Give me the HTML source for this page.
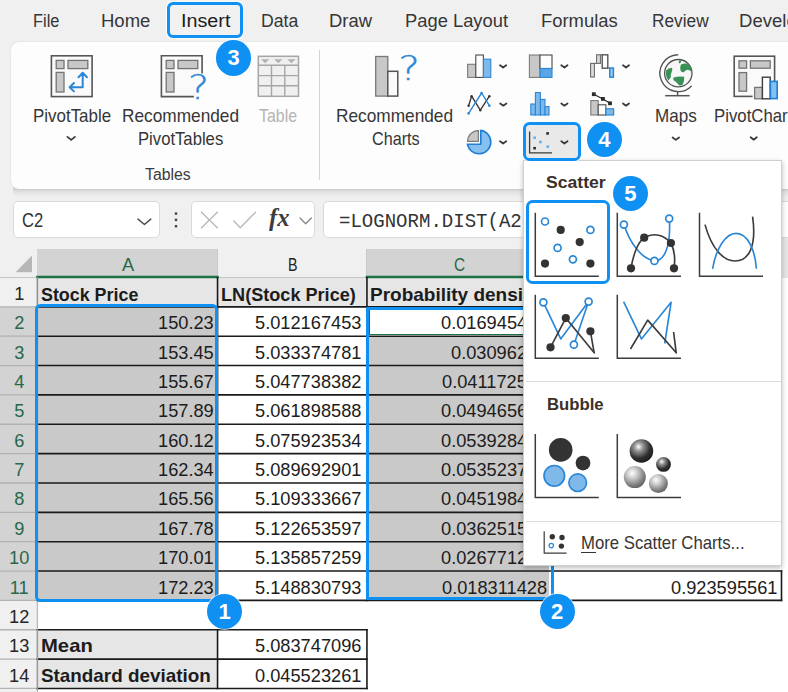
<!DOCTYPE html>
<html lang="en"><head><meta charset="utf-8"><title>Excel - Insert Scatter Chart</title>
<style>
html,body{margin:0;padding:0}
body{width:788px;height:692px;overflow:hidden;background:#f0f0f0;font-family:"Liberation Sans",sans-serif;}
#app{position:relative;width:788px;height:692px;overflow:hidden;background:#f0f0f0}
#app div,#app span.t,#app svg{position:absolute}
.t{white-space:nowrap;transform-origin:0 0;display:block}
.bd{border-radius:50%;background:#0f90f3;color:#fff;font-weight:bold;font-size:22px;text-align:center;box-shadow:0 0 0 1px rgba(255,255,255,.7)}
</style></head>
<body><div id="app">
<!-- ribbon tabs -->
<div style="left:166.80px;top:2.20px;width:76.50px;height:35.80px;box-sizing:border-box;border:3.5px solid #0f90f3;border-radius:6px;background:#f1f1f1;box-shadow:0 0 0 1.2px rgba(255,255,255,.8);"></div>
<span class="t" style="left:33.00px;top:12.75px;font-size:17.5px;line-height:17.5px;color:#363636;transform:scaleX(0.9398);">File</span>
<span class="t" style="left:100.60px;top:12.75px;font-size:17.5px;line-height:17.5px;color:#363636;transform:scaleX(1.0582);">Home</span>
<span class="t" style="left:181.00px;top:12.75px;font-size:17.5px;line-height:17.5px;color:#1c1c1c;transform:scaleX(1.1287);">Insert</span>
<span class="t" style="left:260.50px;top:12.75px;font-size:17.5px;line-height:17.5px;color:#363636;transform:scaleX(1.0090);">Data</span>
<span class="t" style="left:329.00px;top:12.75px;font-size:17.5px;line-height:17.5px;color:#363636;transform:scaleX(1.0530);">Draw</span>
<span class="t" style="left:405.00px;top:12.75px;font-size:17.5px;line-height:17.5px;color:#363636;transform:scaleX(1.0481);">Page Layout</span>
<span class="t" style="left:541.00px;top:12.75px;font-size:17.5px;line-height:17.5px;color:#363636;transform:scaleX(1.0517);">Formulas</span>
<span class="t" style="left:651.70px;top:12.75px;font-size:17.5px;line-height:17.5px;color:#363636;transform:scaleX(0.9864);">Review</span>
<span class="t" style="left:739.40px;top:12.75px;font-size:17.5px;line-height:17.5px;color:#363636;transform:scaleX(1.0600);">Developer</span>
<!-- ribbon -->
<div style="left:13.00px;top:180.00px;width:787.00px;height:18.50px;background:linear-gradient(to bottom,#d3d3d3 0,#d3d3d3 9px,#e3e3e3 12.5px,#ececec 16px,#f0f0f0 18.5px);border-radius:8px 0 0 8px;"></div>
<div style="left:11.40px;top:42.40px;width:788.60px;height:146.60px;background:#fdfdfd;border-radius:8px 0 0 8px;box-shadow:0 0 1.5px rgba(0,0,0,.18);"></div>
<span class="t" style="left:33.00px;top:107.50px;font-size:17.8px;line-height:17.8px;color:#363636;transform:scaleX(0.9522);">PivotTable</span>
<span class="t" style="left:122.20px;top:107.50px;font-size:17.8px;line-height:17.8px;color:#363636;transform:scaleX(0.9709);">Recommended</span>
<span class="t" style="left:138.40px;top:131.00px;font-size:17.8px;line-height:17.8px;color:#363636;transform:scaleX(0.9371);">PivotTables</span>
<span class="t" style="left:259.20px;top:107.50px;font-size:17.8px;line-height:17.8px;color:#b4b4b4;transform:scaleX(0.8953);">Table</span>
<span class="t" style="left:145.10px;top:166.70px;font-size:16px;line-height:16px;color:#3a3a3a;transform:scaleX(0.9881);">Tables</span>
<div style="left:319.40px;top:50.00px;width:1.00px;height:130.00px;background:#d4d4d4;"></div>
<span class="t" style="left:336.30px;top:107.50px;font-size:17.8px;line-height:17.8px;color:#363636;transform:scaleX(0.9709);">Recommended</span>
<span class="t" style="left:371.60px;top:131.00px;font-size:17.8px;line-height:17.8px;color:#363636;transform:scaleX(0.9098);">Charts</span>
<span class="t" style="left:655.30px;top:107.60px;font-size:17.8px;line-height:17.8px;color:#363636;transform:scaleX(0.9603);">Maps</span>
<span class="t" style="left:714.40px;top:107.60px;font-size:17.8px;line-height:17.8px;color:#363636;transform:scaleX(0.9435);">PivotChart</span>
<!-- formula bar -->
<div style="left:12.70px;top:201.20px;width:147.70px;height:36.70px;background:#ffffff;box-sizing:border-box;border:1px solid #dadada;border-radius:5px;"></div>
<div style="left:191.40px;top:201.20px;width:124.10px;height:36.70px;background:#ffffff;box-sizing:border-box;border:1px solid #dadada;border-radius:5px;"></div>
<div style="left:322.70px;top:201.20px;width:477.30px;height:36.70px;background:#ffffff;box-sizing:border-box;border:1px solid #dadada;border-radius:5px;"></div>
<span class="t" style="left:21.60px;top:211.05px;font-size:19.5px;line-height:19.5px;color:#333;transform:scaleX(0.8505);">C2</span>
<span class="t" style="left:269.40px;top:205.40px;font-size:25px;line-height:25px;color:#3c3c3c;transform:scaleX(0.9892);font-family:'Liberation Serif',serif;font-weight:bold;font-style:italic;">fx</span>
<span class="t" style="left:339.00px;top:212.80px;font-size:19.6px;line-height:19.6px;color:#333;transform:scaleX(0.9715);font-family:'Liberation Mono',monospace;">=LOGNORM.DIST(A2,$B$13,$B$14,FALSE)</span>
<!-- sheet -->
<div style="left:0.00px;top:249.00px;width:788.00px;height:443.00px;background:#ffffff;"></div>
<div style="left:0.00px;top:249.40px;width:37.40px;height:28.40px;background:#f0f0f0;"></div>
<div style="left:37.40px;top:249.40px;width:180.15px;height:28.40px;background:#d3d3d3;"></div>
<div style="left:217.55px;top:249.40px;width:149.40px;height:28.40px;background:#f0f0f0;"></div>
<div style="left:366.95px;top:249.40px;width:185.35px;height:28.40px;background:#d3d3d3;"></div>
<div style="left:552.30px;top:249.40px;width:235.70px;height:28.40px;background:#f0f0f0;"></div>
<div style="left:217.55px;top:276.80px;width:149.40px;height:1.00px;background:#c6c6c6;"></div>
<div style="left:552.30px;top:276.80px;width:235.70px;height:1.00px;background:#c6c6c6;"></div>
<div style="left:0.00px;top:276.80px;width:37.40px;height:1.00px;background:#c6c6c6;"></div>
<div style="left:217.05px;top:249.40px;width:1.00px;height:28.40px;background:#c9c9c9;"></div>
<div style="left:366.45px;top:249.40px;width:1.00px;height:28.40px;background:#c9c9c9;"></div>
<span class="t" style="left:121.80px;top:255.80px;font-size:18.2px;line-height:18.2px;color:#27684a;transform:scaleX(1.0050);">A</span>
<span class="t" style="left:288.30px;top:255.80px;font-size:18.2px;line-height:18.2px;color:#262626;transform:scaleX(0.7826);">B</span>
<span class="t" style="left:454.40px;top:255.80px;font-size:18.2px;line-height:18.2px;color:#27684a;transform:scaleX(0.8445);">C</span>
<div style="left:0.00px;top:277.80px;width:37.40px;height:29.05px;background:#f0f0f0;"></div>
<div style="left:0.00px;top:306.85px;width:37.40px;height:29.36px;background:#d3d3d3;"></div>
<div style="left:0.00px;top:336.21px;width:37.40px;height:29.35px;background:#d3d3d3;"></div>
<div style="left:0.00px;top:365.56px;width:37.40px;height:29.36px;background:#d3d3d3;"></div>
<div style="left:0.00px;top:394.92px;width:37.40px;height:29.36px;background:#d3d3d3;"></div>
<div style="left:0.00px;top:424.27px;width:37.40px;height:29.35px;background:#d3d3d3;"></div>
<div style="left:0.00px;top:453.62px;width:37.40px;height:29.36px;background:#d3d3d3;"></div>
<div style="left:0.00px;top:482.98px;width:37.40px;height:29.36px;background:#d3d3d3;"></div>
<div style="left:0.00px;top:512.34px;width:37.40px;height:29.36px;background:#d3d3d3;"></div>
<div style="left:0.00px;top:541.69px;width:37.40px;height:29.36px;background:#d3d3d3;"></div>
<div style="left:0.00px;top:571.05px;width:37.40px;height:29.36px;background:#d3d3d3;"></div>
<div style="left:0.00px;top:600.40px;width:37.40px;height:29.36px;background:#f0f0f0;"></div>
<div style="left:0.00px;top:629.76px;width:37.40px;height:29.35px;background:#f0f0f0;"></div>
<div style="left:0.00px;top:659.11px;width:37.40px;height:29.36px;background:#f0f0f0;"></div>
<div style="left:0.00px;top:688.47px;width:37.40px;height:29.36px;background:#f0f0f0;"></div>
<span class="t" style="left:14.14px;top:285.30px;font-size:18.2px;line-height:18.2px;color:#262626;transform:scaleX(1.0000);">1</span>
<span class="t" style="left:14.14px;top:314.35px;font-size:18.2px;line-height:18.2px;color:#27684a;transform:scaleX(1.0000);">2</span>
<span class="t" style="left:14.14px;top:343.71px;font-size:18.2px;line-height:18.2px;color:#27684a;transform:scaleX(1.0000);">3</span>
<span class="t" style="left:14.14px;top:373.06px;font-size:18.2px;line-height:18.2px;color:#27684a;transform:scaleX(1.0000);">4</span>
<span class="t" style="left:14.14px;top:402.42px;font-size:18.2px;line-height:18.2px;color:#27684a;transform:scaleX(1.0000);">5</span>
<span class="t" style="left:14.14px;top:431.77px;font-size:18.2px;line-height:18.2px;color:#27684a;transform:scaleX(1.0000);">6</span>
<span class="t" style="left:14.14px;top:461.12px;font-size:18.2px;line-height:18.2px;color:#27684a;transform:scaleX(1.0000);">7</span>
<span class="t" style="left:14.14px;top:490.48px;font-size:18.2px;line-height:18.2px;color:#27684a;transform:scaleX(1.0000);">8</span>
<span class="t" style="left:14.14px;top:519.84px;font-size:18.2px;line-height:18.2px;color:#27684a;transform:scaleX(1.0000);">9</span>
<span class="t" style="left:9.08px;top:549.19px;font-size:18.2px;line-height:18.2px;color:#27684a;transform:scaleX(1.0000);">10</span>
<span class="t" style="left:9.75px;top:578.55px;font-size:18.2px;line-height:18.2px;color:#27684a;transform:scaleX(1.0000);">11</span>
<span class="t" style="left:9.08px;top:607.90px;font-size:18.2px;line-height:18.2px;color:#262626;transform:scaleX(1.0000);">12</span>
<span class="t" style="left:9.08px;top:637.26px;font-size:18.2px;line-height:18.2px;color:#262626;transform:scaleX(1.0000);">13</span>
<span class="t" style="left:9.08px;top:666.61px;font-size:18.2px;line-height:18.2px;color:#262626;transform:scaleX(1.0000);">14</span>
<div style="left:37.40px;top:277.80px;width:514.90px;height:29.05px;background:#e6e6e6;"></div>
<div style="left:37.40px;top:306.85px;width:180.15px;height:293.55px;background:#c9c9c9;"></div>
<div style="left:366.95px;top:306.85px;width:182.05px;height:293.55px;background:#c9c9c9;"></div>
<div style="left:366.95px;top:306.85px;width:182.05px;height:29.36px;background:#ffffff;"></div>
<div style="left:37.40px;top:629.76px;width:180.15px;height:58.71px;background:#e6e6e6;"></div>
<svg width="788" height="692" viewBox="0 0 788 692" style="left:0;top:0" stroke-linecap="square"><line x1="37.40" y1="277.05" x2="217.55" y2="277.05" stroke="#1f7246" stroke-width="2.5"/><line x1="366.95" y1="277.05" x2="552.30" y2="277.05" stroke="#1f7246" stroke-width="2.5"/><line x1="0.00" y1="306.85" x2="37.40" y2="306.85" stroke="#b2b2b2" stroke-width="1.3"/><line x1="0.00" y1="336.21" x2="37.40" y2="336.21" stroke="#b2b2b2" stroke-width="1.3"/><line x1="0.00" y1="365.56" x2="37.40" y2="365.56" stroke="#b2b2b2" stroke-width="1.3"/><line x1="0.00" y1="394.92" x2="37.40" y2="394.92" stroke="#b2b2b2" stroke-width="1.3"/><line x1="0.00" y1="424.27" x2="37.40" y2="424.27" stroke="#b2b2b2" stroke-width="1.3"/><line x1="0.00" y1="453.62" x2="37.40" y2="453.62" stroke="#b2b2b2" stroke-width="1.3"/><line x1="0.00" y1="482.98" x2="37.40" y2="482.98" stroke="#b2b2b2" stroke-width="1.3"/><line x1="0.00" y1="512.34" x2="37.40" y2="512.34" stroke="#b2b2b2" stroke-width="1.3"/><line x1="0.00" y1="541.69" x2="37.40" y2="541.69" stroke="#b2b2b2" stroke-width="1.3"/><line x1="0.00" y1="571.05" x2="37.40" y2="571.05" stroke="#b2b2b2" stroke-width="1.3"/><line x1="0.00" y1="600.40" x2="37.40" y2="600.40" stroke="#b2b2b2" stroke-width="1.3"/><line x1="0.00" y1="629.76" x2="37.40" y2="629.76" stroke="#b2b2b2" stroke-width="1.3"/><line x1="0.00" y1="659.11" x2="37.40" y2="659.11" stroke="#b2b2b2" stroke-width="1.3"/><line x1="0.00" y1="688.47" x2="37.40" y2="688.47" stroke="#b2b2b2" stroke-width="1.3"/><line x1="0.00" y1="717.82" x2="37.40" y2="717.82" stroke="#b2b2b2" stroke-width="1.3"/><line x1="37.40" y1="277.80" x2="37.40" y2="692.00" stroke="#b8b8b8" stroke-width="1.3"/><line x1="37.40" y1="306.85" x2="552.30" y2="306.85" stroke="#1a1a1a" stroke-width="1.6"/><line x1="37.40" y1="336.21" x2="552.30" y2="336.21" stroke="#1a1a1a" stroke-width="1.6"/><line x1="37.40" y1="365.56" x2="552.30" y2="365.56" stroke="#1a1a1a" stroke-width="1.6"/><line x1="37.40" y1="394.92" x2="552.30" y2="394.92" stroke="#1a1a1a" stroke-width="1.6"/><line x1="37.40" y1="424.27" x2="552.30" y2="424.27" stroke="#1a1a1a" stroke-width="1.6"/><line x1="37.40" y1="453.62" x2="552.30" y2="453.62" stroke="#1a1a1a" stroke-width="1.6"/><line x1="37.40" y1="482.98" x2="552.30" y2="482.98" stroke="#1a1a1a" stroke-width="1.6"/><line x1="37.40" y1="512.34" x2="552.30" y2="512.34" stroke="#1a1a1a" stroke-width="1.6"/><line x1="37.40" y1="541.69" x2="552.30" y2="541.69" stroke="#1a1a1a" stroke-width="1.6"/><line x1="37.40" y1="571.05" x2="552.30" y2="571.05" stroke="#1a1a1a" stroke-width="1.6"/><line x1="37.40" y1="600.40" x2="552.30" y2="600.40" stroke="#1a1a1a" stroke-width="1.6"/><line x1="552.30" y1="571.05" x2="781.50" y2="571.05" stroke="#1a1a1a" stroke-width="1.6"/><line x1="552.30" y1="600.40" x2="781.50" y2="600.40" stroke="#1a1a1a" stroke-width="1.6"/><line x1="781.50" y1="571.05" x2="781.50" y2="600.40" stroke="#1a1a1a" stroke-width="1.6"/><line x1="37.40" y1="277.80" x2="37.40" y2="600.40" stroke="#8f8f8f" stroke-width="1.4"/><line x1="217.55" y1="277.80" x2="217.55" y2="600.40" stroke="#1a1a1a" stroke-width="1.6"/><line x1="366.95" y1="277.80" x2="366.95" y2="600.40" stroke="#1a1a1a" stroke-width="1.6"/><line x1="552.30" y1="277.80" x2="552.30" y2="600.40" stroke="#1a1a1a" stroke-width="1.6"/><line x1="37.40" y1="629.76" x2="366.95" y2="629.76" stroke="#1a1a1a" stroke-width="1.6"/><line x1="37.40" y1="659.11" x2="366.95" y2="659.11" stroke="#1a1a1a" stroke-width="1.6"/><line x1="37.40" y1="688.47" x2="366.95" y2="688.47" stroke="#1a1a1a" stroke-width="1.6"/><line x1="37.40" y1="629.76" x2="37.40" y2="688.47" stroke="#9a9a9a" stroke-width="1.4"/><line x1="217.55" y1="629.76" x2="217.55" y2="688.47" stroke="#1a1a1a" stroke-width="1.6"/><line x1="366.95" y1="629.76" x2="366.95" y2="688.47" stroke="#1a1a1a" stroke-width="1.6"/></svg>
<div style="left:368.55px;top:308.45px;width:183.75px;height:26.56px;box-sizing:border-box;border:1.4px solid #1f7246;border-right:none;"></div>
<span class="t" style="left:40.60px;top:285.50px;font-size:18.2px;line-height:18.2px;color:#1c1c1c;transform:scaleX(0.9824);font-weight:bold;">Stock Price</span>
<span class="t" style="left:221.20px;top:285.50px;font-size:18.2px;line-height:18.2px;color:#1c1c1c;transform:scaleX(0.9954);font-weight:bold;">LN(Stock Price)</span>
<span class="t" style="left:370.20px;top:285.50px;font-size:18.2px;line-height:18.2px;color:#1c1c1c;transform:scaleX(1.0441);font-weight:bold;">Probability density</span>
<span class="t" style="left:157.61px;top:314.35px;font-size:18.2px;line-height:18.2px;color:#1c1c1c;transform:scaleX(1.0022);">150.23</span>
<span class="t" style="left:255.39px;top:314.35px;font-size:18.2px;line-height:18.2px;color:#1c1c1c;transform:scaleX(1.0022);">5.012167453</span>
<span class="t" style="left:440.99px;top:314.35px;font-size:18.2px;line-height:18.2px;color:#1c1c1c;transform:scaleX(1.0022);">0.016945447</span>
<span class="t" style="left:157.61px;top:343.71px;font-size:18.2px;line-height:18.2px;color:#1c1c1c;transform:scaleX(1.0022);">153.45</span>
<span class="t" style="left:255.39px;top:343.71px;font-size:18.2px;line-height:18.2px;color:#1c1c1c;transform:scaleX(1.0022);">5.033374781</span>
<span class="t" style="left:451.13px;top:343.71px;font-size:18.2px;line-height:18.2px;color:#1c1c1c;transform:scaleX(1.0022);">0.03096268</span>
<span class="t" style="left:157.61px;top:373.06px;font-size:18.2px;line-height:18.2px;color:#1c1c1c;transform:scaleX(1.0022);">155.67</span>
<span class="t" style="left:255.39px;top:373.06px;font-size:18.2px;line-height:18.2px;color:#1c1c1c;transform:scaleX(1.0022);">5.047738382</span>
<span class="t" style="left:442.34px;top:373.06px;font-size:18.2px;line-height:18.2px;color:#1c1c1c;transform:scaleX(1.0022);">0.041172598</span>
<span class="t" style="left:157.61px;top:402.42px;font-size:18.2px;line-height:18.2px;color:#1c1c1c;transform:scaleX(1.0022);">157.89</span>
<span class="t" style="left:255.39px;top:402.42px;font-size:18.2px;line-height:18.2px;color:#1c1c1c;transform:scaleX(1.0022);">5.061898588</span>
<span class="t" style="left:440.99px;top:402.42px;font-size:18.2px;line-height:18.2px;color:#1c1c1c;transform:scaleX(1.0022);">0.049465627</span>
<span class="t" style="left:157.61px;top:431.77px;font-size:18.2px;line-height:18.2px;color:#1c1c1c;transform:scaleX(1.0022);">160.12</span>
<span class="t" style="left:255.39px;top:431.77px;font-size:18.2px;line-height:18.2px;color:#1c1c1c;transform:scaleX(1.0022);">5.075923534</span>
<span class="t" style="left:440.99px;top:431.77px;font-size:18.2px;line-height:18.2px;color:#1c1c1c;transform:scaleX(1.0022);">0.053928408</span>
<span class="t" style="left:157.61px;top:461.12px;font-size:18.2px;line-height:18.2px;color:#1c1c1c;transform:scaleX(1.0022);">162.34</span>
<span class="t" style="left:255.39px;top:461.12px;font-size:18.2px;line-height:18.2px;color:#1c1c1c;transform:scaleX(1.0022);">5.089692901</span>
<span class="t" style="left:440.99px;top:461.12px;font-size:18.2px;line-height:18.2px;color:#1c1c1c;transform:scaleX(1.0022);">0.053523787</span>
<span class="t" style="left:157.61px;top:490.48px;font-size:18.2px;line-height:18.2px;color:#1c1c1c;transform:scaleX(1.0022);">165.56</span>
<span class="t" style="left:255.39px;top:490.48px;font-size:18.2px;line-height:18.2px;color:#1c1c1c;transform:scaleX(1.0022);">5.109333667</span>
<span class="t" style="left:440.99px;top:490.48px;font-size:18.2px;line-height:18.2px;color:#1c1c1c;transform:scaleX(1.0022);">0.045198418</span>
<span class="t" style="left:157.61px;top:519.84px;font-size:18.2px;line-height:18.2px;color:#1c1c1c;transform:scaleX(1.0022);">167.78</span>
<span class="t" style="left:255.39px;top:519.84px;font-size:18.2px;line-height:18.2px;color:#1c1c1c;transform:scaleX(1.0022);">5.122653597</span>
<span class="t" style="left:440.99px;top:519.84px;font-size:18.2px;line-height:18.2px;color:#1c1c1c;transform:scaleX(1.0022);">0.036251502</span>
<span class="t" style="left:157.61px;top:549.19px;font-size:18.2px;line-height:18.2px;color:#1c1c1c;transform:scaleX(1.0022);">170.01</span>
<span class="t" style="left:255.39px;top:549.19px;font-size:18.2px;line-height:18.2px;color:#1c1c1c;transform:scaleX(1.0022);">5.135857259</span>
<span class="t" style="left:440.99px;top:549.19px;font-size:18.2px;line-height:18.2px;color:#1c1c1c;transform:scaleX(1.0022);">0.026771294</span>
<span class="t" style="left:157.61px;top:578.55px;font-size:18.2px;line-height:18.2px;color:#1c1c1c;transform:scaleX(1.0022);">172.23</span>
<span class="t" style="left:255.39px;top:578.55px;font-size:18.2px;line-height:18.2px;color:#1c1c1c;transform:scaleX(1.0022);">5.148830793</span>
<span class="t" style="left:442.34px;top:578.55px;font-size:18.2px;line-height:18.2px;color:#1c1c1c;transform:scaleX(1.0022);">0.018311428</span>
<span class="t" style="left:670.69px;top:578.55px;font-size:18.2px;line-height:18.2px;color:#1c1c1c;transform:scaleX(1.0022);">0.923595561</span>
<span class="t" style="left:41.20px;top:637.26px;font-size:18.2px;line-height:18.2px;color:#1c1c1c;transform:scaleX(1.1134);font-weight:bold;">Mean</span>
<span class="t" style="left:41.20px;top:666.61px;font-size:18.2px;line-height:18.2px;color:#1c1c1c;transform:scaleX(1.0365);font-weight:bold;">Standard deviation</span>
<span class="t" style="left:255.39px;top:637.26px;font-size:18.2px;line-height:18.2px;color:#1c1c1c;transform:scaleX(1.0022);">5.083747096</span>
<span class="t" style="left:255.39px;top:666.61px;font-size:18.2px;line-height:18.2px;color:#1c1c1c;transform:scaleX(1.0022);">0.045523261</span>
<div style="left:35.25px;top:303.95px;width:183.20px;height:298.10px;box-sizing:border-box;border:3.5px solid #0f90f3;border-radius:5.5px;"></div>
<div style="left:366.15px;top:306.65px;width:187.80px;height:293.40px;box-sizing:border-box;border:3.1px solid #0f90f3;border-radius:1px;"></div>
<div style="left:782.00px;top:237.50px;width:6.00px;height:40.30px;background:#e6e6e6;"></div>
<!-- scatter dropdown -->
<div style="left:522.80px;top:160.40px;width:259.20px;height:405.40px;background:#ffffff;box-sizing:border-box;border:1px solid #d0d0d0;box-shadow:0 2px 5px rgba(0,0,0,.26);"></div>
<span class="t" style="left:546.20px;top:174.25px;font-size:16.5px;line-height:16.5px;color:#3b3029;transform:scaleX(1.0671);font-weight:bold;">Scatter</span>
<span class="t" style="left:546.70px;top:395.75px;font-size:16.5px;line-height:16.5px;color:#3b3029;transform:scaleX(1.0123);font-weight:bold;">Bubble</span>
<div style="left:526.40px;top:381.00px;width:254.60px;height:1.00px;background:#dcdcdc;"></div>
<div style="left:526.40px;top:520.50px;width:254.60px;height:1.00px;background:#dcdcdc;"></div>
<div style="left:525.80px;top:200.00px;width:83.80px;height:84.40px;background:#ffffff;box-sizing:border-box;border:3.5px solid #0f90f3;border-radius:6.5px;"></div>
<span class="t" style="left:580.50px;top:534.50px;font-size:17.8px;line-height:17.8px;color:#363636;transform:scaleX(0.9403);">More Scatter Charts...</span>
<div style="left:580.50px;top:551.50px;width:15.20px;height:1.10px;background:#333;"></div>
<div style="left:522.90px;top:121.90px;width:58.60px;height:39.60px;background:#e9e9e9;box-sizing:border-box;border:3.5px solid #0f90f3;border-radius:6.5px;box-shadow:0 0 0 1px rgba(255,255,255,.7);"></div>
<svg width="788" height="692" viewBox="0 0 788 692" style="left:0;top:0">
<defs>
<radialGradient id="sd" cx="38%" cy="32%" r="70%"><stop offset="0" stop-color="#fff"/><stop offset="0.25" stop-color="#9a9a9a"/><stop offset="0.7" stop-color="#2e2e2e"/><stop offset="1" stop-color="#1e1e1e"/></radialGradient>
<radialGradient id="sl" cx="38%" cy="32%" r="75%"><stop offset="0" stop-color="#fff"/><stop offset="0.3" stop-color="#cfcfcf"/><stop offset="0.75" stop-color="#7c7c7c"/><stop offset="1" stop-color="#5a5a5a"/></radialGradient>
</defs>
<rect x="51.4" y="55.8" width="40.7" height="40.8" fill="#fafafa" stroke="#565656" stroke-width="1.6" />
<rect x="56.2" y="60.4" width="7.8" height="8.2" fill="#c8c8c8" stroke="#747474" stroke-width="1.3" />
<rect x="68.0" y="60.4" width="19.8" height="8.2" fill="#c8c8c8" stroke="#747474" stroke-width="1.3" />
<rect x="56.2" y="72.4" width="7.8" height="19.6" fill="#c8c8c8" stroke="#747474" stroke-width="1.3" />
<path d="M82.7 87.2 V73 M78.5 77.2 L82.7 72.8 L86.9 77.2 M82.7 87.2 H69.8 M74 83 L69.6 87.2 L74 91.4" fill="none" stroke="#2b87d6" stroke-width="2.0" stroke-linecap="round" stroke-linejoin="round"/>
<path d="M67.4 136.9 L71.2 139.9 L74.9 136.9" fill="none" stroke="#3a3a3a" stroke-width="1.8" stroke-linecap="round" stroke-linejoin="round"/>
<path d="M193.9 96.6 H161.4 V55.8 H202.1 V73.4" fill="#fafafa" stroke="#565656" stroke-width="1.6" />
<rect x="166.2" y="60.4" width="7.8" height="8.2" fill="#c8c8c8" stroke="#747474" stroke-width="1.3" />
<rect x="178.0" y="60.4" width="19.8" height="8.2" fill="#c8c8c8" stroke="#747474" stroke-width="1.3" />
<rect x="166.2" y="72.4" width="7.8" height="19.6" fill="#c8c8c8" stroke="#747474" stroke-width="1.3" />
<text transform="translate(187.9,98.8) scale(1.2,1)" font-family="DejaVu Sans,sans-serif" font-weight="200" font-size="33" fill="#2b87d6" stroke="#2b87d6" stroke-width="0.35">?</text>
<rect x="258.3" y="56.3" width="40.2" height="40.0" fill="#f0f0f0" stroke="#a6a6a6" stroke-width="1.5" />
<line x1="258.3" y1="65.3" x2="298.5" y2="65.3" stroke="#a6a6a6" stroke-width="1.4" />
<line x1="271.5" y1="65.3" x2="271.5" y2="96.3" stroke="#a6a6a6" stroke-width="1.4" />
<line x1="284.8" y1="65.3" x2="284.8" y2="96.3" stroke="#a6a6a6" stroke-width="1.4" />
<line x1="258.3" y1="75.6" x2="298.5" y2="75.6" stroke="#a6a6a6" stroke-width="1.4" />
<line x1="258.3" y1="85.8" x2="298.5" y2="85.8" stroke="#a6a6a6" stroke-width="1.4" />
<path d="M261.0 59.2 H269.4 L265.2 63.2 Z" fill="#b2b2b2" stroke="none" stroke-width="1" />
<path d="M274.1 59.2 H282.5 L278.3 63.2 Z" fill="#b2b2b2" stroke="none" stroke-width="1" />
<path d="M287.2 59.2 H295.6 L291.4 63.2 Z" fill="#b2b2b2" stroke="none" stroke-width="1" />
<rect x="375.7" y="56.5" width="12.1" height="39.6" fill="#c8c8c8" stroke="#787878" stroke-width="1.3" />
<rect x="387.8" y="71.3" width="10.0" height="24.8" fill="#fafafa" stroke="#555" stroke-width="1.5" />
<text transform="translate(398.3,80.2) scale(1.22,1)" font-family="DejaVu Sans,sans-serif" font-weight="200" font-size="33.5" fill="#2b87d6" stroke="#2b87d6" stroke-width="0.35">?</text>
<rect x="467.6" y="64.3" width="8.2" height="13.1" fill="#c8c8c8" stroke="#7c7c7c" stroke-width="1.1" />
<rect x="475.8" y="55.0" width="7.6" height="22.4" fill="#fdfdfd" stroke="#4a4a4a" stroke-width="1.1" />
<rect x="483.4" y="59.2" width="7.4" height="18.2" fill="#7fb9ea" stroke="#2b87d6" stroke-width="1.1" />
<path d="M500.0 65.3 L503.1 67.5 L506.2 65.3" fill="none" stroke="#3a3a3a" stroke-width="1.8" stroke-linecap="round" stroke-linejoin="round"/>
<rect x="529.4" y="55.0" width="10.6" height="22.4" fill="#c8c8c8" stroke="#7c7c7c" stroke-width="1.1" />
<rect x="540.0" y="55.0" width="12.0" height="13.5" fill="#fdfdfd" stroke="#4a4a4a" stroke-width="1.1" />
<rect x="540.0" y="68.5" width="12.0" height="8.9" fill="#5aa5e6" stroke="#2b87d6" stroke-width="1.1" />
<path d="M561.3 65.3 L564.4 67.5 L567.5 65.3" fill="none" stroke="#3a3a3a" stroke-width="1.8" stroke-linecap="round" stroke-linejoin="round"/>
<rect x="590.6" y="63.4" width="3.8" height="13.6" fill="#dcdcdc" stroke="#6a6a6a" stroke-width="1.1" />
<rect x="596.6" y="54.8" width="3.8" height="8.6" fill="#dcdcdc" stroke="#6a6a6a" stroke-width="1.1" />
<line x1="594.4" y1="63.4" x2="596.6" y2="63.4" stroke="#6a6a6a" stroke-width="1.1" />
<rect x="602.2" y="54.8" width="5.6" height="13.4" fill="#fdfdfd" stroke="#4a4a4a" stroke-width="1.3" />
<line x1="600.4" y1="54.8" x2="602.2" y2="54.8" stroke="#6a6a6a" stroke-width="1.1" />
<rect x="609.8" y="68.0" width="3.6" height="9.2" fill="#9ccaf2" stroke="#2b87d6" stroke-width="1.5" />
<line x1="607.8" y1="68.2" x2="609.8" y2="68.2" stroke="#6a6a6a" stroke-width="1.1" />
<path d="M623.0 65.3 L626.0 67.5 L629.0 65.3" fill="none" stroke="#3a3a3a" stroke-width="1.8" stroke-linecap="round" stroke-linejoin="round"/>
<path d="M468.6 105.7 L471.6 96.2 L480.3 110.2 L489.4 96.2" fill="none" stroke="#333" stroke-width="1.3" stroke-linejoin="round"/>
<path d="M468.6 113.4 L481.6 93 L489.4 105.7" fill="none" stroke="#2b87d6" stroke-width="1.4" stroke-linejoin="round"/>
<circle cx="468.6" cy="105.7" r="1.2" fill="#333" stroke="none" stroke-width="1" />
<circle cx="471.6" cy="96.2" r="1.2" fill="#333" stroke="none" stroke-width="1" />
<circle cx="480.3" cy="110.2" r="1.2" fill="#333" stroke="none" stroke-width="1" />
<circle cx="489.4" cy="96.2" r="1.2" fill="#333" stroke="none" stroke-width="1" />
<circle cx="468.6" cy="113.4" r="1.3" fill="#2b87d6" stroke="none" stroke-width="1" />
<circle cx="481.6" cy="93.0" r="1.3" fill="#2b87d6" stroke="none" stroke-width="1" />
<circle cx="489.4" cy="105.7" r="1.3" fill="#2b87d6" stroke="none" stroke-width="1" />
<path d="M500.2 103.5 L503.3 105.7 L506.4 103.5" fill="none" stroke="#3a3a3a" stroke-width="1.8" stroke-linecap="round" stroke-linejoin="round"/>
<rect x="530.8" y="104.0" width="4.6" height="11.0" fill="#7fb9ea" stroke="#2b87d6" stroke-width="1.1" />
<rect x="535.4" y="92.6" width="5.0" height="22.4" fill="#7fb9ea" stroke="#2b87d6" stroke-width="1.1" />
<rect x="540.4" y="99.4" width="4.6" height="15.6" fill="#7fb9ea" stroke="#2b87d6" stroke-width="1.1" />
<rect x="545.0" y="106.6" width="4.0" height="8.4" fill="#7fb9ea" stroke="#2b87d6" stroke-width="1.1" />
<path d="M561.3 103.5 L564.4 105.7 L567.5 103.5" fill="none" stroke="#3a3a3a" stroke-width="1.8" stroke-linecap="round" stroke-linejoin="round"/>
<rect x="590.8" y="100.6" width="7.4" height="14.4" fill="#c8c8c8" stroke="#7c7c7c" stroke-width="1.1" />
<rect x="598.2" y="104.8" width="7.7" height="10.2" fill="#fdfdfd" stroke="#4a4a4a" stroke-width="1.1" />
<rect x="605.9" y="108.8" width="7.7" height="6.2" fill="#7fb9ea" stroke="#2b87d6" stroke-width="1.2" />
<path d="M593.8 94.2 L602.9 98.9 L610 103.3" fill="none" stroke="#2a2a2a" stroke-width="1.2" />
<rect x="591.9" y="92.3" width="3.8" height="3.8" fill="#2a2a2a" stroke="none" stroke-width="1" />
<rect x="601.0" y="97.0" width="3.8" height="3.8" fill="#2a2a2a" stroke="none" stroke-width="1" />
<rect x="608.1" y="101.4" width="3.8" height="3.8" fill="#2a2a2a" stroke="none" stroke-width="1" />
<path d="M623.0 103.5 L626.0 105.7 L629.0 103.5" fill="none" stroke="#3a3a3a" stroke-width="1.8" stroke-linecap="round" stroke-linejoin="round"/>
<path d="M480.8 144.2 V130.34 A11.8 11.8 0 1 1 467.41 144.2 Z" fill="#85c0ee" stroke="#1f7fd6" stroke-width="1.6" stroke-linejoin="round"/>
<path d="M478.4 141.4 H467.6 A10.8 10.8 0 0 1 478.4 130.6 Z" fill="#c8c8c8" stroke="#7c7c7c" stroke-width="1.2" />
<path d="M500.0 141.3 L503.1 143.5 L506.2 141.3" fill="none" stroke="#3a3a3a" stroke-width="1.8" stroke-linecap="round" stroke-linejoin="round"/>
<path d="M529.6 131.4 V152.8 H552" fill="none" stroke="#3a3a3a" stroke-width="1.3" />
<rect x="546.3" y="132.1" width="2.6" height="2.6" fill="#2a2a2a" stroke="none" stroke-width="1" />
<rect x="533.3" y="136.5" width="2.6" height="2.6" fill="#62aef0" stroke="none" stroke-width="1" />
<rect x="539.1" y="140.7" width="2.6" height="2.6" fill="#62aef0" stroke="none" stroke-width="1" />
<rect x="533.3" y="146.9" width="2.6" height="2.6" fill="#2a2a2a" stroke="none" stroke-width="1" />
<rect x="546.5" y="145.3" width="2.6" height="2.6" fill="#62aef0" stroke="none" stroke-width="1" />
<path d="M561.3 141.3 L564.4 143.5 L567.5 141.3" fill="none" stroke="#3a3a3a" stroke-width="1.8" stroke-linecap="round" stroke-linejoin="round"/>
<circle cx="678.3" cy="73.2" r="13.7" fill="#f7f7f7" stroke="#555" stroke-width="1.3" />
<path d="M679.4 60.4 q1.6 -1.2 2 0.6 q-0.4 2.2 -2.4 2.6 q-1 -1.6 0.4 -3.2 z" fill="#3a9156" stroke="none" stroke-width="1" />
<path d="M681 64.6 q5 -2.6 8.6 0.6 q2.4 3 2.2 7.6 q-1.6 -3.2 -4.4 -3 q-2.6 0.6 -3.6 2.4 q-2.6 0.4 -3.4 -2.2 q-0.6 -3.4 0.6 -5.4 z" fill="#3a9156" stroke="none" stroke-width="1" />
<path d="M666 70.4 q2.4 -2.6 6 -2.6 q0.8 2.2 -0.4 4.2 q-1.2 3 -0.8 5.6 q-1.4 1.6 -2.4 3 q-3.2 -4.2 -2.4 -10.2 z" fill="#3a9156" stroke="none" stroke-width="1" />
<path d="M673.6 77.6 q5 -1.8 10.6 -0.8 q0.4 4.2 -1.6 8 q-2 1.4 -3.6 0.4 q-2.6 -3.6 -5.4 -5 q-0.8 -1.4 0 -2.6 z" fill="#3a9156" stroke="none" stroke-width="1" />
<path d="M677.7 54.8 A18.4 18.4 0 1 0 691.3 86.2" fill="none" stroke="#555" stroke-width="1.4" stroke-linecap="round"/>
<line x1="677.6" y1="91.6" x2="677.6" y2="95.6" stroke="#555" stroke-width="1.4" />
<line x1="665.2" y1="95.7" x2="689.6" y2="95.7" stroke="#555" stroke-width="1.5" />
<path d="M672.6 137.5 L675.8 139.9 L679.0 137.5" fill="none" stroke="#3a3a3a" stroke-width="1.8" stroke-linecap="round" stroke-linejoin="round"/>
<rect x="734.2" y="56.2" width="40.4" height="40.2" fill="#fafafa" stroke="#565656" stroke-width="1.6" />
<rect x="739.0" y="60.8" width="7.6" height="7.4" fill="#c8c8c8" stroke="#747474" stroke-width="1.3" />
<rect x="750.4" y="60.8" width="19.8" height="7.4" fill="#c8c8c8" stroke="#747474" stroke-width="1.3" />
<rect x="739.0" y="72.6" width="7.6" height="18.6" fill="#c8c8c8" stroke="#747474" stroke-width="1.3" />
<rect x="752.6" y="85.6" width="26.4" height="14.4" fill="#fdfdfd" stroke="none" stroke-width="1" />
<rect x="754.6" y="87.4" width="7.8" height="11.4" fill="#c8c8c8" stroke="#747474" stroke-width="1.3" />
<rect x="762.4" y="77.2" width="7.8" height="21.6" fill="#fdfdfd" stroke="#3e3e3e" stroke-width="1.4" />
<rect x="770.4" y="81.4" width="6.8" height="17.2" fill="#85c0ee" stroke="#1f7fd6" stroke-width="1.6" />
<path d="M750.6 137.3 L753.7 139.7 L756.8 137.3" fill="none" stroke="#3a3a3a" stroke-width="1.8" stroke-linecap="round" stroke-linejoin="round"/>
<path d="M138.0 219.1 L144.4 224.5 L150.8 219.1" fill="none" stroke="#4a4a4a" stroke-width="1.4" stroke-linecap="round" stroke-linejoin="round"/>
<rect x="174.8" y="212.4" width="2.4" height="2.4" fill="#444" stroke="none" stroke-width="1" />
<rect x="174.8" y="218.7" width="2.4" height="2.4" fill="#444" stroke="none" stroke-width="1" />
<rect x="174.8" y="225.0" width="2.4" height="2.4" fill="#444" stroke="none" stroke-width="1" />
<path d="M201 211.8 L217.8 228.2 M217.8 211.8 L201 228.2" fill="none" stroke="#b9b9b9" stroke-width="1.4" />
<path d="M233.4 220.6 L240.2 227.8 L256 211.8" fill="none" stroke="#b9b9b9" stroke-width="1.4" />
<path d="M300.0 217.9 L305.7 223.7 L311.4 217.9" fill="none" stroke="#8a8a8a" stroke-width="1.4" stroke-linecap="round" stroke-linejoin="round"/>
<path d="M32 255.6 V272.2 H15.6 Z" fill="#b7b7b7" stroke="none" stroke-width="1" />
<path d="M535.3 212.8 V276.2 H598.8" fill="none" stroke="#3c3c3c" stroke-width="1.5" />
<circle cx="545.0" cy="221.5" r="3.5" fill="#fff" stroke="#2b87d6" stroke-width="1.7" />
<circle cx="590.4" cy="229.9" r="3.5" fill="#fff" stroke="#2b87d6" stroke-width="1.7" />
<circle cx="557.6" cy="247.9" r="3.5" fill="#fff" stroke="#2b87d6" stroke-width="1.7" />
<circle cx="572.9" cy="259.3" r="3.5" fill="#fff" stroke="#2b87d6" stroke-width="1.7" />
<circle cx="560.7" cy="229.9" r="4.1" fill="#333" stroke="none" stroke-width="1" />
<circle cx="579.7" cy="242.1" r="4.1" fill="#333" stroke="none" stroke-width="1" />
<circle cx="545.0" cy="263.6" r="4.1" fill="#333" stroke="none" stroke-width="1" />
<circle cx="590.4" cy="263.6" r="4.1" fill="#333" stroke="none" stroke-width="1" />
<path d="M617.3 212.8 V276.2 H681.0" fill="none" stroke="#3c3c3c" stroke-width="1.5" />
<path d="M624 224.6 C630 244 642 259 654.4 260.8 C664 261 671 248 669.4 218.6" fill="none" stroke="#2b87d6" stroke-width="1.65" />
<path d="M631 268.3 C634 250 640 240 644.2 237.7 C654 232 664 235 670.9 243 C674.6 250 675.2 260 674 268.3" fill="none" stroke="#3c3c3c" stroke-width="1.65" />
<circle cx="623.9" cy="224.6" r="3.5" fill="#fff" stroke="#2b87d6" stroke-width="1.7" />
<circle cx="654.4" cy="260.9" r="3.5" fill="#fff" stroke="#2b87d6" stroke-width="1.7" />
<circle cx="669.2" cy="218.6" r="3.5" fill="#fff" stroke="#2b87d6" stroke-width="1.7" />
<circle cx="631.0" cy="268.3" r="4.1" fill="#333" stroke="none" stroke-width="1" />
<circle cx="644.2" cy="237.7" r="4.1" fill="#333" stroke="none" stroke-width="1" />
<circle cx="670.9" cy="243.0" r="4.1" fill="#333" stroke="none" stroke-width="1" />
<circle cx="674.0" cy="268.3" r="4.1" fill="#333" stroke="none" stroke-width="1" />
<path d="M699.5 212.8 V276.2 H763.0" fill="none" stroke="#3c3c3c" stroke-width="1.5" />
<path d="M705 224.6 C712 250 724 261 735 261 C748 261 757 248 752.6 216.6" fill="none" stroke="#3c3c3c" stroke-width="1.65" />
<path d="M712.6 268.8 C716 248 726 233.4 736 233.4 C748 233.4 755 250 756.4 268.8" fill="none" stroke="#2b87d6" stroke-width="1.65" />
<path d="M535.3 294.7 V358.2 H598.8" fill="none" stroke="#3c3c3c" stroke-width="1.5" />
<path d="M543.4 302.3 L560.7 338.9 L588.6 301.6 L573.9 344.7" fill="none" stroke="#2b87d6" stroke-width="1.65" stroke-linejoin="round"/>
<path d="M550.5 347.3 L565.8 318.1 L594.2 352.8 L590.4 331.3" fill="none" stroke="#3c3c3c" stroke-width="1.65" stroke-linejoin="round"/>
<circle cx="543.4" cy="302.3" r="3.5" fill="#fff" stroke="#2b87d6" stroke-width="1.7" />
<circle cx="588.6" cy="301.6" r="3.5" fill="#fff" stroke="#2b87d6" stroke-width="1.7" />
<circle cx="573.9" cy="344.7" r="3.5" fill="#fff" stroke="#2b87d6" stroke-width="1.7" />
<circle cx="550.5" cy="347.3" r="4.1" fill="#333" stroke="none" stroke-width="1" />
<circle cx="565.8" cy="318.1" r="4.1" fill="#333" stroke="none" stroke-width="1" />
<circle cx="590.4" cy="331.3" r="4.1" fill="#333" stroke="none" stroke-width="1" />
<path d="M617.3 294.7 V358.2 H681.0" fill="none" stroke="#3c3c3c" stroke-width="1.5" />
<path d="M623.6 301.6 L641.4 338.9 L671.1 302.3 L664.7 343.5" fill="none" stroke="#2b87d6" stroke-width="1.65" stroke-linejoin="round"/>
<path d="M630.5 349 L647.7 320.1 L676.2 352.8 L673.6 332" fill="none" stroke="#3c3c3c" stroke-width="1.65" stroke-linejoin="round"/>
<path d="M535.3 434.0 V497.4 H598.8" fill="none" stroke="#3c3c3c" stroke-width="1.5" />
<circle cx="560.7" cy="449.9" r="11.8" fill="#333" stroke="none" stroke-width="1" />
<circle cx="583.0" cy="463.1" r="7.4" fill="#333" stroke="none" stroke-width="1" />
<circle cx="554.3" cy="475.8" r="10.3" fill="#7fb9ea" stroke="#2b87d6" stroke-width="1.7" />
<circle cx="577.7" cy="482.7" r="8.8" fill="#7fb9ea" stroke="#2b87d6" stroke-width="1.7" />
<path d="M617.3 434.0 V497.4 H681.0" fill="none" stroke="#3c3c3c" stroke-width="1.5" />
<circle cx="641.4" cy="451.0" r="11.8" fill="url(#sd)" stroke="none" stroke-width="1" />
<circle cx="663.5" cy="464.4" r="7.4" fill="url(#sd)" stroke="none" stroke-width="1" />
<circle cx="634.8" cy="477.1" r="11.0" fill="url(#sl)" stroke="none" stroke-width="1" />
<circle cx="658.4" cy="483.5" r="9.5" fill="url(#sl)" stroke="none" stroke-width="1" />
<path d="M544.2 531.2 V553.2 H566.6" fill="none" stroke="#3c3c3c" stroke-width="1.2" />
<circle cx="552.3" cy="536.8" r="2.7" fill="#333" stroke="none" stroke-width="1" />
<circle cx="562.0" cy="537.5" r="2.7" fill="#333" stroke="none" stroke-width="1" />
<circle cx="561.4" cy="546.1" r="2.7" fill="#333" stroke="none" stroke-width="1" />
<circle cx="551.3" cy="545.6" r="2.2" fill="#fff" stroke="#2b87d6" stroke-width="1.2" />
</svg>
<div class="bd" style="left:215.90px;top:40.20px;width:35.4px;height:35.4px;line-height:35.4px;">3</div>
<div class="bd" style="left:586.70px;top:121.90px;width:35.4px;height:35.4px;line-height:35.4px;">4</div>
<div class="bd" style="left:612.70px;top:175.90px;width:35.4px;height:35.4px;line-height:35.4px;">5</div>
<div class="bd" style="left:206.90px;top:593.70px;width:35.4px;height:35.4px;line-height:35.4px;">1</div>
<div class="bd" style="left:539.50px;top:594.10px;width:35.4px;height:35.4px;line-height:35.4px;">2</div>
</div></body></html>
